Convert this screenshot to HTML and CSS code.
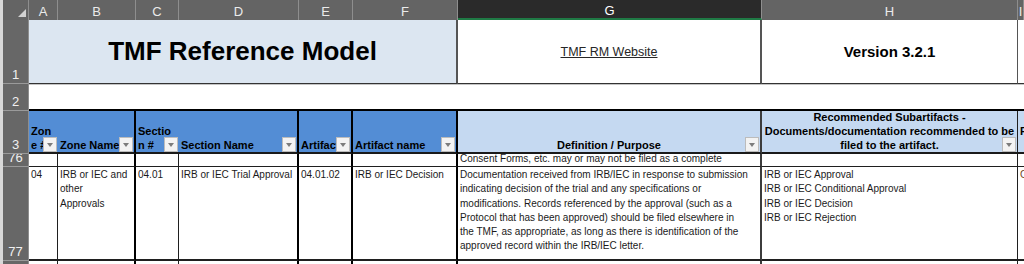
FILE: index.html
```html
<!DOCTYPE html>
<html lang="en">
<head>
    <meta charset="UTF-8">
    <meta name="viewport" content="width=device-width, initial-scale=1.0">
    <title>TMF Reference Model</title>
    <link rel="stylesheet" href="styles.css">
</head>
<body>
    <div class="sheet">
        <div class="row heads">
            <div class="corner">
                <svg width="26" height="20" viewBox="0 0 26 20"><polygon points="23,9 23,17 15,17" fill="#d2d2d2"/></svg>
            </div>
            <div>A</div>
            <div>B</div>
            <div>C</div>
            <div>D</div>
            <div>E</div>
            <div>F</div>
            <div class="sel">G</div>
            <div>H</div>
            <div>I</div>
        </div>

        <div class="row r1">
            <div class="rh">1</div>
            <div class="title">TMF Reference Model</div>
            <div class="link">TMF RM Website</div>
            <div class="version">Version 3.2.1</div>
            <div></div>
        </div>

        <div class="row r2">
            <div class="rh">2</div>
            <div class="blank"></div>
        </div>

        <div class="row r3">
            <div class="rh">3</div>
            <div class="hd"><div class="lbl">Zon<br>e #</div><span class="flt"></span></div>
            <div class="hd e-thick"><div class="lbl">Zone Name</div><span class="flt"></span></div>
            <div class="hd"><div class="lbl">Sectio<br>n #</div><span class="flt"></span></div>
            <div class="hd e-thick"><div class="lbl">Section Name</div><span class="flt"></span></div>
            <div class="hd e-thick"><div class="lbl">Artifact #</div><span class="flt"></span></div>
            <div class="hd e-thick"><div class="lbl">Artifact name</div><span class="flt"></span></div>
            <div class="hd-lt e-gray"><div class="lbl center">Definition / Purpose</div><span class="flt"></span></div>
            <div class="hd-lt e-thin"><div class="lbl center">Recommended Subartifacts -<br>Documents/documentation recommended to be<br>filed to the artifact.</div><span class="flt"></span></div>
            <div class="hd-lt"><div class="lbl">R<br>&nbsp;</div></div>
        </div>

        <div class="row r76">
            <div class="rh">76</div>
            <div class="e-thin"></div>
            <div class="e-thick"></div>
            <div class="e-thin"></div>
            <div class="e-thick"></div>
            <div class="e-thick"></div>
            <div class="e-thick"></div>
            <div class="e-gray">Consent Forms, etc. may or may not be filed as a complete</div>
            <div class="e-thin"></div>
            <div></div>
        </div>

        <div class="row r77">
            <div class="rh">77</div>
            <div class="e-thin">04</div>
            <div class="e-thick">IRB or IEC and<br>other<br>Approvals</div>
            <div class="e-thin">04.01</div>
            <div class="e-thick">IRB or IEC Trial Approval</div>
            <div class="e-thick">04.01.02</div>
            <div class="e-thick">IRB or IEC Decision</div>
            <div class="e-gray lines">Documentation received from IRB/IEC in response to submission<br>
                indicating decision of the trial and any specifications or<br>
                modifications. Records referenced by the approval (such as a<br>
                Protocol that has been approved) should be filed elsewhere in<br>
                the TMF, as appropriate, as long as there is identification of the<br>
                approved record within the IRB/IEC letter.</div>
            <div class="e-thin lines">
                IRB or IEC Approval<br>
                IRB or IEC Conditional Approval<br>
                IRB or IEC Decision<br>
                IRB or IEC Rejection
            </div>
            <div class="core">C</div>
        </div>

        <div class="row r78">
            <div class="rh"></div>
            <div class="e-thin"></div>
            <div class="e-thick"></div>
            <div class="e-thin"></div>
            <div class="e-thick"></div>
            <div class="e-thick"></div>
            <div class="e-thick"></div>
            <div class="e-gray"></div>
            <div class="e-thin"></div>
            <div></div>
        </div>
    </div>
</body>
</html>
```

FILE: styles.css
```css
body {
    margin: 0;
    background-color: #d8d8d8;
    font-family: "Liberation Sans", Arial, sans-serif;
    color: #1a1a1a;
    overflow: hidden;
}
.sheet {
    margin-left: 3px;
    height: 264px;
    background-color: #fff;
}
.row {
    display: grid;
    grid-template-columns: 26px 29px 78px 43px 120px 54px 105px 304px 256px 1fr;
}
.row > div {
    box-sizing: border-box;
    min-width: 0;
    overflow: hidden;
}

/* column letters */
.heads {
    height: 20px;
    background-color: #646464;
    color: #ebebeb;
    font-size: 13px;
}
.heads > div {
    display: flex;
    align-items: center;
    justify-content: center;
    padding-top: 2px;
    border-right: 1px solid #8e8e8e;
}
.heads .corner {
    padding: 0;
    display: block;
}
.heads .corner svg {
    display: block;
}
.heads .sel {
    background-color: #2a2a2a;
    color: #fff;
    border-bottom: 2px solid #1f7a45;
}

/* row numbers */
.row > .rh {
    display: flex;
    align-items: flex-end;
    justify-content: center;
    padding: 0 0 2px;
    background-color: #676767;
    color: #f0f0f0;
    font-size: 13px;
    font-weight: normal;
    line-height: 13px;
    border-right: 1px solid #8e8e8e;
    border-bottom: 1px solid #9a9a9a;
}

/* cell edges */
.e-thin {
    border-right: 1px solid #1f1f1f;
}
.e-thick {
    border-right: 2px solid #000;
}
.e-gray {
    border-right: 2px solid #3c3c3c;
}

/* row 1 */
.r1 {
    height: 64px;
}
.r1 > div {
    display: flex;
    align-items: center;
    justify-content: center;
    border-bottom: 1px solid #333;
}
.title {
    grid-column: span 6;
    background-color: #dce6f1;
    font-size: 26px;
    font-weight: bold;
    color: #000;
    border-right: 2px solid #555;
}
.link {
    font-size: 12.5px;
    color: #262626;
    text-decoration: underline;
    border-right: 2px solid #555;
    padding-top: 1px;
}
.version {
    font-size: 15px;
    font-weight: bold;
    color: #000;
    border-right: 1px solid #555;
}

/* row 2 */
.r2 {
    height: 27px;
}
.blank {
    grid-column: span 9;
    border-bottom: 2px solid #000;
    box-shadow: inset 0 1px #c4c4c4;
}

/* header row */
.r3 {
    height: 43px;
}
.r3 > div {
    position: relative;
    display: flex;
    align-items: flex-end;
    border-bottom: 2px solid #1a1a1a;
    font-size: 11px;
    font-weight: bold;
    line-height: 14px;
    color: #000;
}
.hd {
    background-color: #538dd5;
}
.hd-lt {
    background-color: #c5d9f1;
}
.lbl {
    width: 100%;
    padding: 0 2px;
    white-space: nowrap;
    overflow: hidden;
}
.lbl.center {
    padding: 0;
    text-align: center;
}
.flt {
    position: absolute;
    right: 1px;
    bottom: 0;
    width: 14px;
    height: 15px;
    box-sizing: border-box;
    background-color: #f3f3f3;
    border: 1px solid #bcbcbc;
}
.flt::after {
    content: "";
    position: absolute;
    left: 3px;
    top: 5px;
    border-left: 3px solid transparent;
    border-right: 3px solid transparent;
    border-top: 4px solid #7c7c7c;
}

/* data rows */
.r76 {
    height: 13px;
}
.r76 > div {
    border-bottom: 1px solid #1f1f1f;
    padding: 0 2px;
    font-size: 10px;
    line-height: 10px;
    white-space: nowrap;
}
.r77 {
    height: 94px;
}
.r77 > div {
    border-bottom: 2px solid #1f1f1f;
    padding: 1px 2px 0;
    font-size: 10px;
    line-height: 14.25px;
}
.r77 > .lines {
    white-space: nowrap;
}
.r77 > .core {
    color: #6b4220;
    white-space: nowrap;
}
.r78 {
    height: 3px;
}
.r78 > .rh {
    border-bottom: none;
}
```
